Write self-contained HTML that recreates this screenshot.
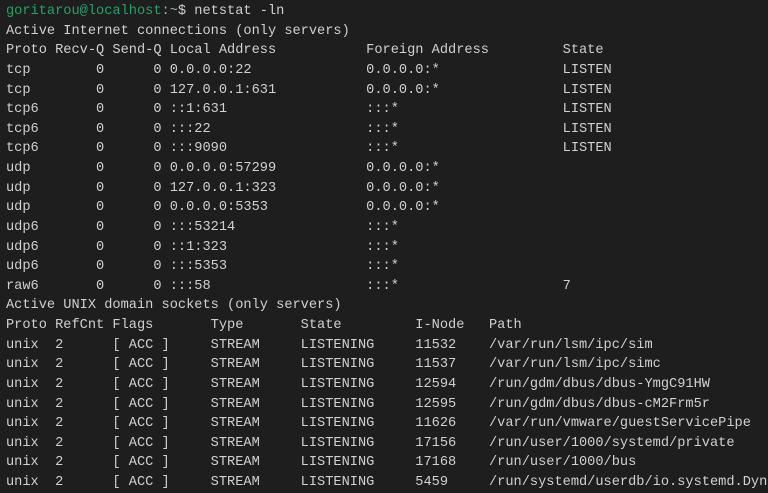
<!DOCTYPE html><html><head><style>
html,body{margin:0;background:#1e1e1e;width:768px;height:493px;overflow:hidden}
pre{margin:0;padding:2px 0 0 6px;font-family:"Liberation Mono","DejaVu Sans Mono",monospace;font-size:13.65px;line-height:19.63px;color:#d0d0d0;white-space:pre}
.g{color:#26a269}.b{color:#a0a8c8}
</style></head><body><pre><span class="g">goritarou@localhost</span><span class="b">:~</span>$ netstat -ln
Active Internet connections (only servers)
Proto Recv-Q Send-Q Local Address           Foreign Address         State
tcp        0      0 0.0.0.0:22              0.0.0.0:*               LISTEN
tcp        0      0 127.0.0.1:631           0.0.0.0:*               LISTEN
tcp6       0      0 ::1:631                 :::*                    LISTEN
tcp6       0      0 :::22                   :::*                    LISTEN
tcp6       0      0 :::9090                 :::*                    LISTEN
udp        0      0 0.0.0.0:57299           0.0.0.0:*
udp        0      0 127.0.0.1:323           0.0.0.0:*
udp        0      0 0.0.0.0:5353            0.0.0.0:*
udp6       0      0 :::53214                :::*
udp6       0      0 ::1:323                 :::*
udp6       0      0 :::5353                 :::*
raw6       0      0 :::58                   :::*                    7
Active UNIX domain sockets (only servers)
Proto RefCnt Flags       Type       State         I-Node   Path
unix  2      [ ACC ]     STREAM     LISTENING     11532    /var/run/lsm/ipc/sim
unix  2      [ ACC ]     STREAM     LISTENING     11537    /var/run/lsm/ipc/simc
unix  2      [ ACC ]     STREAM     LISTENING     12594    /run/gdm/dbus/dbus-YmgC91HW
unix  2      [ ACC ]     STREAM     LISTENING     12595    /run/gdm/dbus/dbus-cM2Frm5r
unix  2      [ ACC ]     STREAM     LISTENING     11626    /var/run/vmware/guestServicePipe
unix  2      [ ACC ]     STREAM     LISTENING     17156    /run/user/1000/systemd/private
unix  2      [ ACC ]     STREAM     LISTENING     17168    /run/user/1000/bus
unix  2      [ ACC ]     STREAM     LISTENING     5459     /run/systemd/userdb/io.systemd.Dyn</pre></body></html>
